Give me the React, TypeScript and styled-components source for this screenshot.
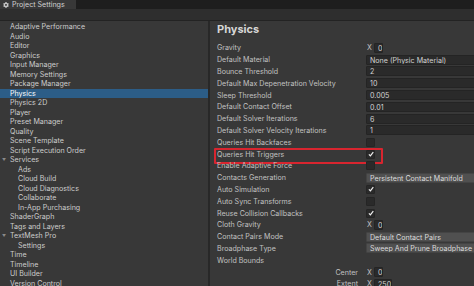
import styled, { createGlobalStyle } from 'styled-components';
import { FaCog } from 'react-icons/fa';

const GlobalStyle = createGlobalStyle`
  html, body {
    margin: 0;
    padding: 0;
    background: #383838;
    overflow: hidden;
  }
  * {
    box-sizing: border-box;
  }
`;

type NavItem = { name: string; level?: number; folder?: boolean; active?: boolean };

const navItems: NavItem[] = [
  { name: 'Adaptive Performance' },
  { name: 'Audio' },
  { name: 'Editor' },
  { name: 'Graphics' },
  { name: 'Input Manager' },
  { name: 'Memory Settings' },
  { name: 'Package Manager' },
  { name: 'Physics', active: true },
  { name: 'Physics 2D' },
  { name: 'Player' },
  { name: 'Preset Manager' },
  { name: 'Quality' },
  { name: 'Scene Template' },
  { name: 'Script Execution Order' },
  { name: 'Services', folder: true },
  { name: 'Ads', level: 1 },
  { name: 'Cloud Build', level: 1 },
  { name: 'Cloud Diagnostics', level: 1 },
  { name: 'Collaborate', level: 1 },
  { name: 'In-App Purchasing', level: 1 },
  { name: 'ShaderGraph' },
  { name: 'Tags and Layers' },
  { name: 'TextMesh Pro', folder: true },
  { name: 'Settings', level: 1 },
  { name: 'Time' },
  { name: 'Timeline' },
  { name: 'UI Builder' },
  { name: 'Version Control' },
];

type Setting =
  | { label: string; kind: 'vector'; value: string; axis?: string; right?: boolean }
  | { label: string; kind: 'text' | 'popup'; value: string }
  | { label: string; kind: 'toggle'; checked: boolean; marked?: boolean }
  | { label: string; kind: 'none' };

const settings: Setting[] = [
  { label: 'Gravity', kind: 'vector', value: '0' },
  { label: 'Default Material', kind: 'text', value: 'None (Physic Material)' },
  { label: 'Bounce Threshold', kind: 'text', value: '2' },
  { label: 'Default Max Depenetration Velocity', kind: 'text', value: '10' },
  { label: 'Sleep Threshold', kind: 'text', value: '0.005' },
  { label: 'Default Contact Offset', kind: 'text', value: '0.01' },
  { label: 'Default Solver Iterations', kind: 'text', value: '6' },
  { label: 'Default Solver Velocity Iterations', kind: 'text', value: '1' },
  { label: 'Queries Hit Backfaces', kind: 'toggle', checked: false },
  { label: 'Queries Hit Triggers', kind: 'toggle', checked: true, marked: true },
  { label: 'Enable Adaptive Force', kind: 'toggle', checked: false },
  { label: 'Contacts Generation', kind: 'popup', value: 'Persistent Contact Manifold' },
  { label: 'Auto Simulation', kind: 'toggle', checked: true },
  { label: 'Auto Sync Transforms', kind: 'toggle', checked: false },
  { label: 'Reuse Collision Callbacks', kind: 'toggle', checked: true },
  { label: 'Cloth Gravity', kind: 'vector', value: '0' },
  { label: 'Contact Pairs Mode', kind: 'popup', value: 'Default Contact Pairs' },
  { label: 'Broadphase Type', kind: 'popup', value: 'Sweep And Prune Broadphase' },
  { label: 'World Bounds', kind: 'none' },
  { label: 'Center', kind: 'vector', value: '0', right: true },
  { label: 'Extent', kind: 'vector', value: '250', right: true },
];

function Check() {
  return (
    <svg width="6" height="6" viewBox="0 0 10 10">
      <polyline points="1.5,5.5 4,8 8.8,1.8" fill="none" stroke="#eeeeee" strokeWidth="2" />
    </svg>
  );
}

function Value({ item }: { item: Setting }) {
  if (item.kind === 'vector') {
    return (
      <Vector>
        <Axis>X</Axis>
        <Field>{item.value}</Field>
      </Vector>
    );
  }
  if (item.kind === 'text') return <Field>{item.value}</Field>;
  if (item.kind === 'popup') return <Popup>{item.value}</Popup>;
  if (item.kind === 'toggle')
    return <Toggle>{item.checked && <Check />}</Toggle>;
  return null;
}

export default function App() {
  return (
    <Window>
      <GlobalStyle />
      <TabBar>
        <Tab>
          <FaCog size={6} color="#c8c8c8" />
          Project Settings
        </Tab>
      </TabBar>
      <Toolbar />
      <Body>
        <Sidebar>
          {navItems.map((item) => (
            <NavRow key={item.name} $active={item.active} $level={item.level ?? 0}>
              {item.folder && <Arrow>▼</Arrow>}
              {item.name}
            </NavRow>
          ))}
        </Sidebar>
        <Inspector>
          <Title>Physics</Title>
          {settings.map((item) => (
            <Row key={item.label} $marked={item.kind === 'toggle' && item.marked}>
              <Label $right={item.kind === 'vector' && item.right}>{item.label}</Label>
              <Value item={item} />
            </Row>
          ))}
        </Inspector>
      </Body>
    </Window>
  );
}

const Window = styled.div`
  width: 474px;
  height: 286px;
  display: flex;
  flex-direction: column;
  overflow: hidden;
  background: #383838;
  font-family: Inter, 'Liberation Sans', sans-serif;
  font-size: 7.1px;
  color: #c8c8c8;
`;

const TabBar = styled.div`
  height: 9px;
  display: flex;
  background: #1e1e1e;
`;

const Tab = styled.div`
  width: 76px;
  display: flex;
  align-items: center;
  gap: 3px;
  padding-left: 3px;
  background: #383838;
  color: #d0d0d0;
  line-height: 9px;
  overflow: hidden;
`;

const Toolbar = styled.div`
  height: 12px;
  background: #2e2e2e;
  border-bottom: 1px solid #232323;
`;

const Body = styled.div`
  flex: 1;
  display: flex;
  min-height: 0;
`;

const Sidebar = styled.div`
  width: 210px;
  flex-shrink: 0;
  padding-top: 1px;
  border-right: 2px solid #282828;
`;

const NavRow = styled.div<{ $active?: boolean; $level: number }>`
  position: relative;
  height: 9.5px;
  line-height: 9.5px;
  padding-left: ${(p) => 10 + p.$level * 8}px;
  white-space: nowrap;
  color: ${(p) => (p.$active ? '#ffffff' : '#cdcdcd')};
  background: ${(p) => (p.$active ? '#2c5d87' : 'transparent')};
`;

const Arrow = styled.span`
  position: absolute;
  left: 2px;
  font-size: 4px;
  color: #8a8a8a;
`;

const Inspector = styled.div`
  flex: 1;
  min-width: 0;
  padding-left: 7px;
  overflow: hidden;
`;

const Title = styled.div`
  height: 21px;
  padding-top: 2px;
  padding-left: 0;
  font-size: 11px;
  font-weight: 700;
  line-height: 13px;
  color: #d6d6d6;
`;

const Row = styled.div<{ $marked?: boolean }>`
  position: relative;
  height: 11.8px;
  display: grid;
  grid-template-columns: 149px 150px;
  align-items: center;
  white-space: nowrap;

  ${(p) =>
    p.$marked &&
    `
    &::after {
      content: '';
      position: absolute;
      left: -3px;
      top: 0;
      width: 165px;
      height: 12px;
      border: 2px solid #d8252f;
      border-radius: 1px;
    }
  `}
`;

const Label = styled.div<{ $right?: boolean }>`
  color: #c2c2c2;
  text-align: ${(p) => (p.$right ? 'right' : 'left')};
  padding-right: ${(p) => (p.$right ? '8px' : '0')};
`;

const Field = styled.div`
  height: 10px;
  line-height: 10px;
  padding-left: 3px;
  background: #2a2a2a;
  border: 1px solid #242424;
  border-radius: 1px;
  color: #d2d2d2;
  overflow: hidden;
`;

const Popup = styled(Field)`
  background: #505050;
  border-color: #444444;
  color: #dcdcdc;
`;

const Vector = styled.div`
  display: flex;
  align-items: center;
`;

const Axis = styled.span`
  width: 8px;
  padding-left: 1px;
  color: #c2c2c2;
  flex-shrink: 0;
`;

const Toggle = styled.div`
  width: 9px;
  height: 9px;
  display: flex;
  align-items: center;
  justify-content: center;
  background: #2a2a2a;
  border: 1px solid #252525;
  border-radius: 1px;
`;
